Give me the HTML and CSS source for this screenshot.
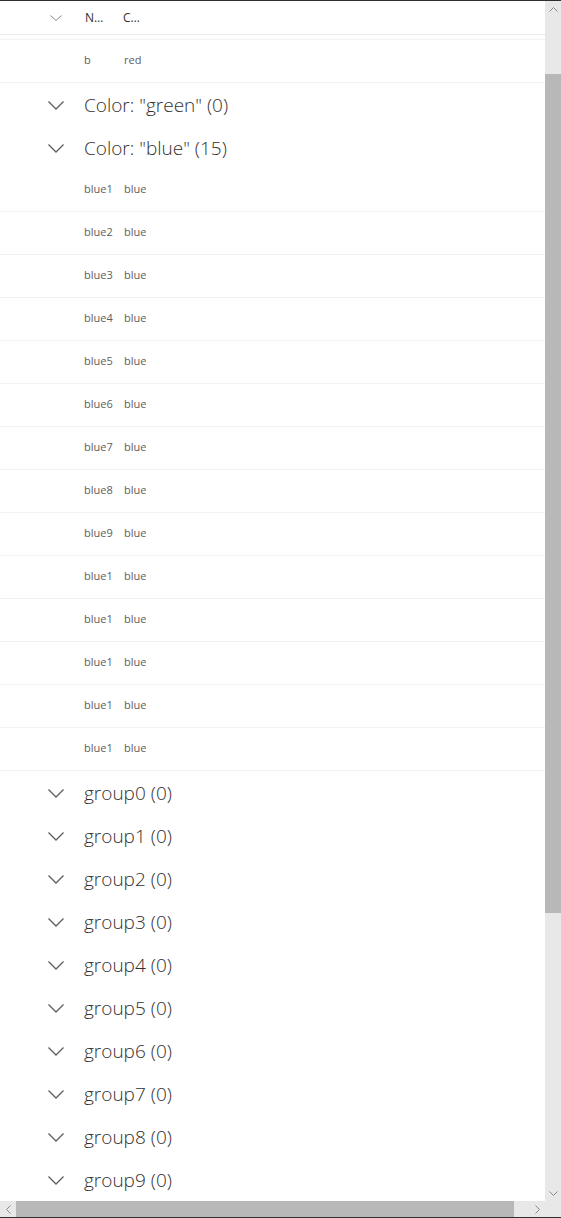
FILE: index.html
```html
<!DOCTYPE html>
<html lang="en">
<head>
<meta charset="utf-8">
<title>Grouped list</title>
<link rel="stylesheet" href="styles.css">
</head>
<body>
<div class="frame">
  <div class="viewport">
    <div class="list-header">
      <span class="chev-cell"><svg class="chev-sm" viewBox="0 0 12 6" width="12" height="6"><path d="M0.5 0.5 L6 5.5 L11.5 0.5" /></svg></span>
      <span class="hcell c1">Name</span>
      <span class="hcell c2">Color</span>
    </div>
    <div class="header-gap"></div>

    <div class="row"><span class="cell c1">b</span><span class="cell c2">red</span></div>

    <div class="group"><span class="chev-cell"><svg class="chev" viewBox="0 0 16 9" width="16" height="9"><path d="M0.5 0.5 L8 8 L15.5 0.5" /></svg></span><span class="group-title">Color: "green" (0)</span></div>
    <div class="group"><span class="chev-cell"><svg class="chev" viewBox="0 0 16 9" width="16" height="9"><path d="M0.5 0.5 L8 8 L15.5 0.5" /></svg></span><span class="group-title">Color: "blue" (15)</span></div>

    <div class="row"><span class="cell c1">blue1</span><span class="cell c2">blue</span></div>
    <div class="row"><span class="cell c1">blue2</span><span class="cell c2">blue</span></div>
    <div class="row"><span class="cell c1">blue3</span><span class="cell c2">blue</span></div>
    <div class="row"><span class="cell c1">blue4</span><span class="cell c2">blue</span></div>
    <div class="row"><span class="cell c1">blue5</span><span class="cell c2">blue</span></div>
    <div class="row"><span class="cell c1">blue6</span><span class="cell c2">blue</span></div>
    <div class="row"><span class="cell c1">blue7</span><span class="cell c2">blue</span></div>
    <div class="row"><span class="cell c1">blue8</span><span class="cell c2">blue</span></div>
    <div class="row"><span class="cell c1">blue9</span><span class="cell c2">blue</span></div>
    <div class="row"><span class="cell c1">blue10</span><span class="cell c2">blue</span></div>
    <div class="row"><span class="cell c1">blue11</span><span class="cell c2">blue</span></div>
    <div class="row"><span class="cell c1">blue12</span><span class="cell c2">blue</span></div>
    <div class="row"><span class="cell c1">blue13</span><span class="cell c2">blue</span></div>
    <div class="row"><span class="cell c1">blue14</span><span class="cell c2">blue</span></div>

    <div class="group"><span class="chev-cell"><svg class="chev" viewBox="0 0 16 9" width="16" height="9"><path d="M0.5 0.5 L8 8 L15.5 0.5" /></svg></span><span class="group-title">group0 (0)</span></div>
    <div class="group"><span class="chev-cell"><svg class="chev" viewBox="0 0 16 9" width="16" height="9"><path d="M0.5 0.5 L8 8 L15.5 0.5" /></svg></span><span class="group-title">group1 (0)</span></div>
    <div class="group"><span class="chev-cell"><svg class="chev" viewBox="0 0 16 9" width="16" height="9"><path d="M0.5 0.5 L8 8 L15.5 0.5" /></svg></span><span class="group-title">group2 (0)</span></div>
    <div class="group"><span class="chev-cell"><svg class="chev" viewBox="0 0 16 9" width="16" height="9"><path d="M0.5 0.5 L8 8 L15.5 0.5" /></svg></span><span class="group-title">group3 (0)</span></div>
    <div class="group"><span class="chev-cell"><svg class="chev" viewBox="0 0 16 9" width="16" height="9"><path d="M0.5 0.5 L8 8 L15.5 0.5" /></svg></span><span class="group-title">group4 (0)</span></div>
    <div class="group"><span class="chev-cell"><svg class="chev" viewBox="0 0 16 9" width="16" height="9"><path d="M0.5 0.5 L8 8 L15.5 0.5" /></svg></span><span class="group-title">group5 (0)</span></div>
    <div class="group"><span class="chev-cell"><svg class="chev" viewBox="0 0 16 9" width="16" height="9"><path d="M0.5 0.5 L8 8 L15.5 0.5" /></svg></span><span class="group-title">group6 (0)</span></div>
    <div class="group"><span class="chev-cell"><svg class="chev" viewBox="0 0 16 9" width="16" height="9"><path d="M0.5 0.5 L8 8 L15.5 0.5" /></svg></span><span class="group-title">group7 (0)</span></div>
    <div class="group"><span class="chev-cell"><svg class="chev" viewBox="0 0 16 9" width="16" height="9"><path d="M0.5 0.5 L8 8 L15.5 0.5" /></svg></span><span class="group-title">group8 (0)</span></div>
    <div class="group"><span class="chev-cell"><svg class="chev" viewBox="0 0 16 9" width="16" height="9"><path d="M0.5 0.5 L8 8 L15.5 0.5" /></svg></span><span class="group-title">group9 (0)</span></div>
  </div>

  <div class="vscroll">
    <div class="sb-btn"><svg viewBox="0 0 9 5" width="9" height="5"><path d="M0.5 4.5 L4.5 0.5 L8.5 4.5" /></svg></div>
    <div class="vtrack-top"></div>
    <div class="vthumb"></div>
    <div class="vtrack-rest"></div>
    <div class="sb-btn"><svg viewBox="0 0 9 5" width="9" height="5"><path d="M0.5 0.5 L4.5 4.5 L8.5 0.5" /></svg></div>
  </div>

  <div class="hscroll">
    <div class="sb-btn"><svg viewBox="0 0 5 9" width="5" height="9"><path d="M4.5 0.5 L0.5 4.5 L4.5 8.5" /></svg></div>
    <div class="hthumb"></div>
    <div class="htrack-rest"></div>
    <div class="sb-btn"><svg viewBox="0 0 5 9" width="5" height="9"><path d="M0.5 0.5 L4.5 4.5 L0.5 8.5" /></svg></div>
  </div>
  <div class="corner"></div>
</div>
</body>
</html>
```

FILE: styles.css
```css
html, body {
  margin: 0;
  padding: 0;
  background: #ffffff;
}

.frame {
  width: 561px;
  height: 1218px;
  box-sizing: border-box;
  border-top: 1px solid #2f2f2f;
  border-bottom: 1px solid #2f2f2f;
  display: grid;
  grid-template-columns: 545px 16px;
  grid-template-rows: 1200px 16px;
  overflow: hidden;
  font-family: "Open Sans", "Noto Sans", "Liberation Sans", sans-serif;
}

.viewport {
  overflow: hidden;
  background: #ffffff;
}

.list-header {
  height: 33px;
  border-bottom: 1px solid #edebe9;
  display: flex;
  align-items: center;
  font-size: 12px;
  color: #323130;
}

.header-gap {
  height: 4px;
  border-bottom: 1px solid #f3f2f1;
}

.chev-cell {
  width: 84px;
  flex: none;
  display: flex;
  justify-content: flex-end;
  padding-right: 21px;
  box-sizing: border-box;
}

.chev-sm {
  fill: none;
  stroke: #8a8886;
  stroke-width: 1;
  margin-right: 1px;
}

.chev {
  fill: none;
  stroke: #605e5c;
  stroke-width: 1.3;
}

.hcell {
  white-space: nowrap;
  overflow: hidden;
  text-overflow: ellipsis;
  flex: none;
}

.hcell.c1 {
  width: 18px;
  margin-left: 1px;
  margin-right: 20px;
}

.hcell.c2 {
  width: 18px;
}

.row {
  height: 42px;
  box-sizing: content-box;
  border-bottom: 1px solid #f3f2f1;
  display: flex;
  align-items: center;
  padding-left: 84px;
  font-size: 11px;
  color: #605e5c;
}

.row .cell {
  margin-bottom: 4px;
}

.cell {
  white-space: nowrap;
  overflow: hidden;
  flex: none;
}

.cell.c1 {
  width: 29px;
  margin-right: 11px;
}

.group {
  height: 43px;
  display: flex;
  align-items: center;
}

.group .chev-cell {
  padding-right: 20px;
  padding-top: 1px;
}

.group-title {
  font-size: 19px;
  font-weight: 300;
  color: #323130;
  white-space: nowrap;
}

.vscroll {
  background: #e8e8e8;
  display: flex;
  flex-direction: column;
}

.sb-btn {
  flex: none;
  width: 16px;
  height: 16px;
  display: flex;
  align-items: center;
  justify-content: center;
}

.sb-btn svg {
  fill: none;
  stroke: #8a8a8a;
  stroke-width: 1;
}

.vtrack-top {
  height: 57px;
  flex: none;
}

.vthumb {
  height: 839px;
  flex: none;
  background: #b8b8b8;
}

.vtrack-rest {
  flex: 1;
}

.hscroll {
  background: #e8e8e8;
  display: flex;
}

.hthumb {
  width: 498px;
  flex: none;
  background: #b8b8b8;
}

.htrack-rest {
  flex: 1;
}

.corner {
  background: #e8e8e8;
}
```
